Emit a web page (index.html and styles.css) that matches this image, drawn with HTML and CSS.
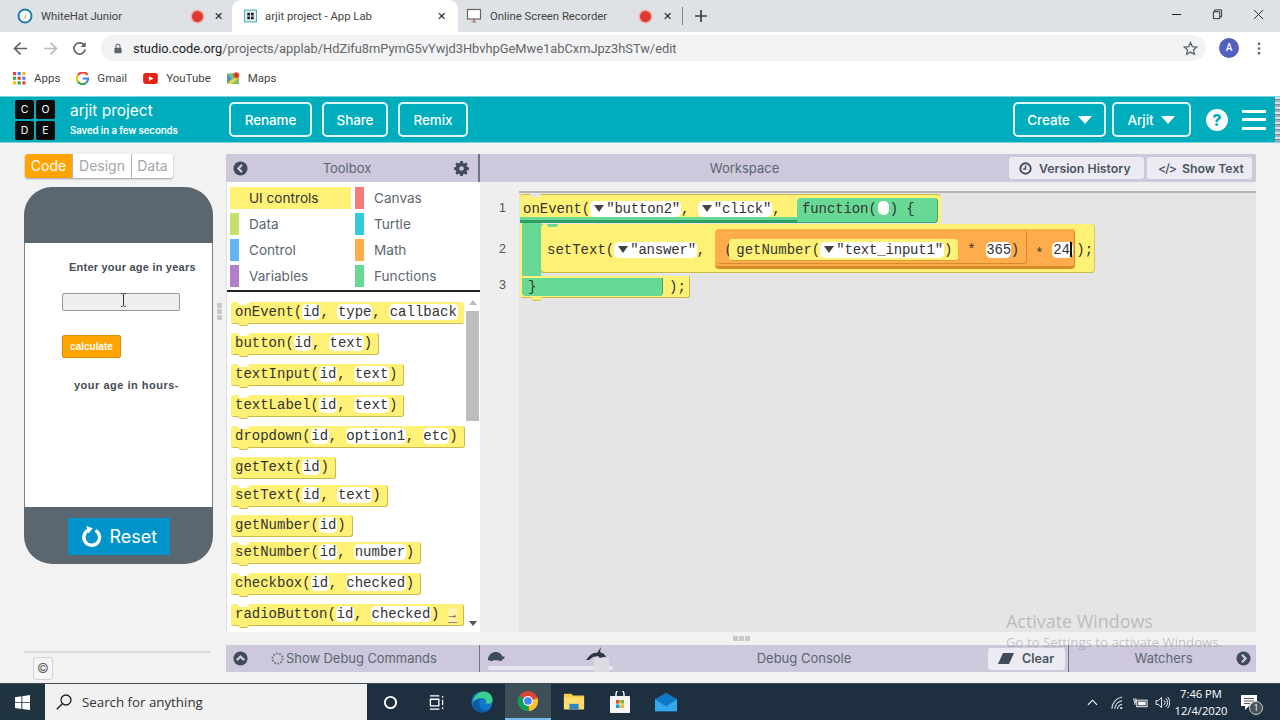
FILE: index.html
```html
<!DOCTYPE html>
<html lang="en">
<head>
<meta charset="utf-8">
<title>arjit project - App Lab</title>
<link rel="stylesheet" href="styles.css">
</head>
<body>
<div class="tabstrip">
  <div class="tab tab-first">
    <svg class="favicon" viewBox="0 0 16 16"><circle cx="8" cy="8" r="6.5" fill="#fff" stroke="#1f7fa8" stroke-width="2"/><path d="M10 4 L6.5 11 L8.5 9.5Z" fill="#f39c2d"/></svg>
    <span class="tab-title">WhiteHat Junior</span>
    <span class="rec"></span>
    <span class="tab-x">✕</span>
  </div>
  <div class="tab tab-active">
    <svg class="favicon" viewBox="0 0 16 16"><rect x=".7" y=".7" width="14.6" height="14.6" fill="#e6f3f4" stroke="#3fa6b2" stroke-width="1.2"/><rect x="4" y="4" width="3.4" height="3.4" fill="#222"/><rect x="8.6" y="4" width="3.4" height="3.4" fill="#222"/><rect x="4" y="8.6" width="3.4" height="3.4" fill="#222"/><rect x="8.6" y="8.6" width="3.4" height="3.4" fill="#222"/></svg>
    <span class="tab-title">arjit project - App Lab</span>
    <span class="tab-x">✕</span>
  </div>
  <div class="tab tab-last">
    <svg class="favicon" viewBox="0 0 16 16"><rect x="1.5" y="1.5" width="13" height="9.5" fill="#fff" stroke="#666" stroke-width="1.2"/><path d="M8 11v3" stroke="#c44" stroke-width="1.4"/><path d="M5.5 14h5" stroke="#888"/></svg>
    <span class="tab-title">Online Screen Recorder</span>
    <span class="rec"></span>
    <span class="tab-x">✕</span>
  </div>
  <span class="tab-sep"></span>
  <svg class="newtab" viewBox="0 0 12 12"><path d="M6 0v12M0 6h12" stroke="#3c4043" stroke-width="1.7"/></svg>
  <div class="win-controls">
    <svg viewBox="0 0 12 12"><path d="M1 6h10" stroke="#222" stroke-width="1.1"/></svg>
    <svg viewBox="0 0 12 12"><path d="M3 3V1h7.5v7.5H8.5M1.5 3h7v7.5h-7z" fill="none" stroke="#222" stroke-width="1"/></svg>
    <svg viewBox="0 0 12 12"><path d="M1 1l10 10M11 1L1 11" stroke="#222" stroke-width="1"/></svg>
  </div>
</div>

<div class="toolbar">
  <svg class="nav" viewBox="0 0 16 16"><path d="M15 8H2M8 1.7L1.7 8 8 14.3" fill="none" stroke="#5f6368" stroke-width="1.8"/></svg>
  <svg class="nav" viewBox="0 0 16 16"><path d="M1 8h13M8 1.7L14.3 8 8 14.3" fill="none" stroke="#b9bcc0" stroke-width="1.8"/></svg>
  <svg class="nav" viewBox="0 0 16 16"><path d="M13.4 5.2A6 6 0 1 0 14 9" fill="none" stroke="#5f6368" stroke-width="1.8"/><path d="M14.6 1v5.4H9.2z" fill="#5f6368"/></svg>
  <div class="omnibox">
    <svg class="lock" viewBox="0 0 10 12"><rect x=".5" y="5" width="9" height="7" rx="1" fill="#5f6368"/><path d="M2.5 5V3.2a2.5 2.5 0 0 1 5 0V5" fill="none" stroke="#5f6368" stroke-width="1.3"/></svg>
    <span class="url"><b>studio.code.org</b>/projects/applab/HdZifu8mPymG5vYwjd3HbvhpGeMwe1abCxmJpz3hSTw/edit</span>
    <svg class="star" viewBox="0 0 16 16"><path d="M8 1.6l1.9 4.3 4.7.5-3.5 3.1 1 4.6L8 11.8l-4.1 2.3 1-4.6L1.4 6.4l4.7-.5z" fill="none" stroke="#5f6368" stroke-width="1.4"/></svg>
  </div>
  <span class="avatar">A</span>
  <svg class="kebab" viewBox="0 0 4 14"><circle cx="2" cy="2" r="1.4" fill="#5f6368"/><circle cx="2" cy="7" r="1.4" fill="#5f6368"/><circle cx="2" cy="12" r="1.4" fill="#5f6368"/></svg>
</div>

<div class="bookmarks">
  <span class="bm">
    <svg class="bm-icon" viewBox="0 0 14 14"><g><rect x="0" y="0" width="3.4" height="3.4" fill="#ea4335"/><rect x="5" y="0" width="3.4" height="3.4" fill="#4285f4"/><rect x="10" y="0" width="3.4" height="3.4" fill="#fbbc05"/><rect x="0" y="5" width="3.4" height="3.4" fill="#34a853"/><rect x="5" y="5" width="3.4" height="3.4" fill="#ea4335"/><rect x="10" y="5" width="3.4" height="3.4" fill="#4285f4"/><rect x="0" y="10" width="3.4" height="3.4" fill="#fbbc05"/><rect x="5" y="10" width="3.4" height="3.4" fill="#34a853"/><rect x="10" y="10" width="3.4" height="3.4" fill="#ea4335"/></g></svg>
    Apps</span>
  <span class="bm">
    <svg class="bm-icon" viewBox="0 0 14 14"><path d="M12.4 3.3A6 6 0 0 0 2 3.6" fill="none" stroke="#ea4335" stroke-width="2.2"/><path d="M2 3.6a6 6 0 0 0 0 6.8" fill="none" stroke="#fbbc05" stroke-width="2.2"/><path d="M2 10.4a6 6 0 0 0 9 1.2" fill="none" stroke="#34a853" stroke-width="2.2"/><path d="M11 11.6A6 6 0 0 0 13 7H7.2" fill="none" stroke="#4285f4" stroke-width="2.2"/></svg>
    Gmail</span>
  <span class="bm">
    <svg class="bm-icon bm-yt" viewBox="0 0 16 12"><rect width="16" height="12" rx="3" fill="#e62117"/><path d="M6.2 3.2l5 2.8-5 2.8z" fill="#fff"/></svg>
    YouTube</span>
  <span class="bm">
    <svg class="bm-icon" viewBox="0 0 14 14"><path d="M0 2l7-1 6 1v11H0z" fill="#7cc36a"/><path d="M0 13L13 2v4L5 13z" fill="#f5d23f"/><path d="M0 2l5 5-5 5z" fill="#4a90e2"/><circle cx="10" cy="3.6" r="3.2" fill="#dd4b3e"/><circle cx="10" cy="3.6" r="1.1" fill="#8a2018"/></svg>
    Maps</span>
</div>

<header class="header">
  <div class="logo"><span>C</span><span>O</span><span>D</span><span>E</span></div>
  <div class="project">
    <div class="project-name">arjit project</div>
    <div class="project-status">Saved in a few seconds</div>
  </div>
  <div class="btn-group">
    <a class="hbtn hbtn-rename">Rename</a>
    <a class="hbtn hbtn-share">Share</a>
    <a class="hbtn hbtn-remix">Remix</a>
  </div>
  <div class="header-right">
    <a class="hbtn hbtn-create">Create <i class="caret"></i></a>
    <a class="hbtn hbtn-user">Arjit <i class="caret"></i></a>
    <span class="help">?</span>
    <span class="burger"><i></i><i></i><i></i></span>
  </div>
  <span class="stripe"></span>
</header>

<main class="main">
  <section class="left">
    <div class="modes">
      <span class="mode mode-on">Code</span><span class="mode">Design</span><span class="mode">Data</span>
    </div>
    <div class="phone">
      <div class="phone-top"></div>
      <div class="screen">
        <div class="lbl lbl-enter">Enter your age in years</div>
        <div class="age-input"></div>
        <div class="calc">calculate</div>
        <div class="lbl lbl-hours">your age in hours-</div>
        <svg class="ibeam" viewBox="0 0 7 14"><path d="M1 .6h1.5l1 1 1-1H6M3.5 1.6v10.8M1 13.4h1.500l1-1 1 1H6" fill="none" stroke="#333" stroke-width="1"/></svg>
      </div>
      <div class="phone-bottom">
        <div class="reset">
          <svg class="reset-ico" viewBox="0 0 24 24"><path d="M9 4.6A9 9 0 1 0 16.4 5" fill="none" stroke="#fff" stroke-width="3.8"/><path d="M6 0l7.5 2.6-5 6z" fill="#fff"/></svg>
          <span>Reset</span>
        </div>
      </div>
    </div>
    <div class="legal"><span class="copyright">©</span></div>
    <span class="grip"><i></i><i></i><i></i></span>
  </section>

  <section class="ide">
    <div class="pane-head tb-head">
      <svg class="round-ico" viewBox="0 0 16 16"><circle cx="8" cy="8" r="7.5" fill="#3f4b57"/><path d="M9.6 4L5.8 8l3.8 4" fill="none" stroke="#cfcadc" stroke-width="2.4"/></svg>
      <span class="pane-title">Toolbox</span>
      <svg class="gear" viewBox="0 0 16 16"><path fill="#3f4b57" fill-rule="evenodd" d="M6.7 0h2.6l.4 2.1 1.3.6 1.8-1.2 1.8 1.8-1.2 1.8.6 1.3 2 .4v2.6l-2 .4-.6 1.3 1.2 1.8-1.8 1.8-1.8-1.2-1.3.6-.4 2.1H6.7l-.4-2.1-1.3-.6-1.8 1.2-1.8-1.8 1.2-1.8-.6-1.3-2-.4V6.800l2-.4.6-1.3-1.2-1.800 1.800-1.800 1.800 1.200 1.300-.6zM8 5.500a2.500 2.500 0 1 0 0 5 2.500 2.500 0 0 0 0-5z"/></svg>
    </div>
    <div class="pane-head ws-head">
      <span class="ws-title">Workspace</span>
      <span class="ws-btn ws-version">
        <svg class="ws-ico" viewBox="0 0 14 14"><circle cx="7" cy="7" r="5.600" fill="none" stroke="#3f4b57" stroke-width="2"/><path d="M7 3.800V7.500H4.500" fill="none" stroke="#3f4b57" stroke-width="1.500"/></svg>
        Version History</span>
      <span class="ws-btn ws-text"><span class="code-ico">&lt;/&gt;</span> Show Text</span>
    </div>

    <div class="toolbox">
      <div class="cats">
        <div class="cat cat-active" ><i class="sw sw-ui"></i>UI controls</div>
        <div class="cat"><i class="sw sw-canvas"></i>Canvas</div>
        <div class="cat"><i class="sw sw-data"></i>Data</div>
        <div class="cat"><i class="sw sw-turtle"></i>Turtle</div>
        <div class="cat"><i class="sw sw-control"></i>Control</div>
        <div class="cat"><i class="sw sw-math"></i>Math</div>
        <div class="cat"><i class="sw sw-vars"></i>Variables</div>
        <div class="cat"><i class="sw sw-funcs"></i>Functions</div>
      </div>
      <div class="palette">
        <div class="palette-list">
          <div class="blk stmt blk-clip">onEvent(<u>id</u>, <u>type</u>, <u>callback</u></div>
          <div class="blk stmt">button(<u>id</u>, <u>text</u>)</div>
          <div class="blk stmt">textInput(<u>id</u>, <u>text</u>)</div>
          <div class="blk stmt">textLabel(<u>id</u>, <u>text</u>)</div>
          <div class="blk stmt">dropdown(<u>id</u>, <u>option1</u>, <u>etc</u>)</div>
          <div class="blk gap6">getText(<u>id</u>)</div>
          <div class="blk stmt gap8">setText(<u>id</u>, <u>text</u>)</div>
          <div class="blk gap5">getNumber(<u>id</u>)</div>
          <div class="blk stmt">setNumber(<u>id</u>, <u>number</u>)</div>
          <div class="blk stmt">checkbox(<u>id</u>, <u>checked</u>)</div>
          <div class="blk stmt">radioButton(<u>id</u>, <u>checked</u>) <span class="more">→</span></div>
        </div>
        <div class="scroll">
          <i class="sc-up"></i>
          <i class="sc-thumb"></i>
          <i class="sc-down"></i>
        </div>
      </div>
    </div>

    <div class="workspace">
      <div class="gutter"><span class="ln ln1">1</span><span class="ln ln2">2</span><span class="ln ln3">3</span></div>
      <div class="canvas">
        <div class="script">
          <div class="ev-head">
            <div class="ev-args">onEvent(<u><i class="tri"></i>"button2"</u>, <u class="click"><i class="tri"></i>"click"</u>,</div>
            <div class="fn">function(<u class="fn-arg"></u>) {</div>
          </div>
          <div class="ev-mid">
            <div class="green-col"></div>
            <div class="settext">
              setText(<u class="answer"><i class="tri"></i>"answer"</u>,
              <div class="mul">
                <div class="mul-in">
                  <span class="paren">(</span>
                  <div class="getnum">getNumber(<u><i class="tri"></i>"text_input1"</u>)</div>
                  <span class="star">*</span>
                  <u class="num365">365</u><span class="paren2">)</span>
                </div>
                <span class="star star2">*</span>
                <u class="num24">24<i class="caretline"></i></u>
              </div>
              <span class="tail">);</span>
            </div>
          </div>
          <div class="ev-foot">
            <div class="fn-end">}</div><span class="foot-tail">);</span>
          </div>
        </div>
      </div>
    </div>

    <div class="handle"><i></i><i></i><i></i></div>

    <div class="debug">
      <div class="dbg-left">
        <svg class="round-ico" viewBox="0 0 16 16"><circle cx="8" cy="8" r="7.500" fill="#3f4b57"/><path d="M4 9.800L8 6l4 3.800" fill="none" stroke="#cfcadc" stroke-width="2.400"/></svg>
        <svg class="spin" viewBox="0 0 14 14"><circle cx="7" cy="7" r="5.500" fill="none" stroke="#6b7480" stroke-width="2" stroke-dasharray="1.800 1.600"/></svg>
        <span>Show Debug Commands</span>
      </div>
      <div class="dbg-console">
        <div class="speed">
          <svg class="turtle" viewBox="0 0 20 12"><path d="M1 10C2 3 6 1 10 1s6 3 7 5h2c1 1 0 3-2 3l-1 2h-2l-1-1H7l-1 1H4l-1-1z" fill="#3f4b57"/></svg>
          <svg class="rabbit" viewBox="0 0 20 14"><path d="M0 13C4 8 7 5 11 6L15 0l-1 5 4 2 2 3-3 0-3 1-2-2-5 1-4 3z" fill="#2d3640"/></svg>
          <div class="track"><i class="thumb"></i></div>
        </div>
        <span class="dbg-title">Debug Console</span>
        <span class="clear">
          <svg class="eraser" viewBox="0 0 16 11"><path d="M5 0h11L11 11H0z" fill="#3f4b57"/></svg>
          Clear</span>
      </div>
      <div class="dbg-watch">
        <span class="watch-title">Watchers</span>
        <svg class="round-ico" viewBox="0 0 16 16"><circle cx="8" cy="8" r="7.500" fill="#3f4b57"/><path d="M6.400 4l3.800 4-3.800 4" fill="none" stroke="#cfcadc" stroke-width="2.400"/></svg>
      </div>
    </div>
  </section>
  <div class="activate">
    <div class="act-1">Activate Windows</div>
    <div class="act-2">Go to Settings to activate Windows.</div>
  </div>
</main>

<footer class="taskbar">
  <div class="start"><svg viewBox="0 0 16 16"><path d="M0 2.300l6.800-1v6.300H0zM7.800 1.200L16 0v7.600H7.800zM0 8.500h6.800v6.300L0 13.800zM7.800 8.500H16V16l-8.200-1.200z" fill="#fff"/></svg></div>
  <div class="search">
    <svg viewBox="0 0 16 16"><circle cx="10" cy="6" r="5" fill="none" stroke="#222" stroke-width="1.300"/><path d="M6.300 9.700L.8 15.200" stroke="#222" stroke-width="1.500"/></svg>
    <span>Search for anything</span>
  </div>
  <div class="task"><svg viewBox="0 0 16 16"><circle cx="8" cy="8" r="6" fill="none" stroke="#fff" stroke-width="2"/></svg></div>
  <div class="task"><svg viewBox="0 0 16 16"><path d="M1 1h10M1 15h10M1.500 4.500h9v7h-9zM14.500 1v2M14.500 5v6M14.500 13v2" fill="none" stroke="#fff" stroke-width="1.400"/></svg></div>
  <div class="task"><svg class="big" viewBox="0 0 24 24"><circle cx="12" cy="12" r="11.500" fill="#1377c9"/><path d="M2 13C3 5 9 .5 14 .5c6 0 10 5 9.500 10-.2 3-5 4-7 3 1-3-1-6-5-6-4 0-8 2-9.500 5.500z" fill="#3ecf8e"/><path d="M9 14c0 5 5 9 11 6-2 2-5 3.500-8 3.500C6 23.500 1 18 2 13c2-3 5-4.500 7-4z" fill="#0c59a4"/></svg></div>
  <div class="task task-on"><svg class="big" viewBox="0 0 24 24"><circle cx="12" cy="12" r="11" fill="#db4437"/><path d="M12 12L22.500 9a11 11 0 0 1-9.500 14z" fill="#fbc02d"/><path d="M12 12l1 11A11 11 0 0 1 2.500 6z" fill="#0f9d58"/><circle cx="12" cy="12" r="5.400" fill="#fff"/><circle cx="12" cy="12" r="4.200" fill="#4285f4"/></svg></div>
  <div class="task"><svg class="big" viewBox="0 0 24 20"><path d="M1 1h8l2 2h12v15H1z" fill="#f7c948"/><rect x="1" y="5" width="22" height="13" fill="#ffdc6e"/><rect x="7" y="12" width="10" height="6" fill="#2f88c4"/></svg></div>
  <div class="task"><svg class="big" viewBox="0 0 20 22"><path d="M6 6V3a4 4 0 0 1 8 0v3" fill="none" stroke="#fff" stroke-width="1.400"/><rect x="0" y="5" width="20" height="17" rx="1" fill="#f5f5f5"/><rect x="6" y="9" width="3.600" height="3.600" fill="#e2572a"/><rect x="10.400" y="9" width="3.600" height="3.600" fill="#7db72f"/><rect x="6" y="13.400" width="3.600" height="3.600" fill="#1c9ad6"/><rect x="10.400" y="13.400" width="3.600" height="3.600" fill="#f5b81f"/></svg></div>
  <div class="task"><svg class="big" viewBox="0 0 24 20"><path d="M0 7L12 0l12 7v13H0z" fill="#0f78c8"/><path d="M0 7l12 8 12-8v13H0z" fill="#34a8ec"/></svg></div>
  <div class="tray">
    <svg class="tr-up" viewBox="0 0 12 7"><path d="M1 6l5-5 5 5" fill="none" stroke="#fff" stroke-width="1.200"/></svg>
    <svg class="tr-wifi" viewBox="0 0 14 14"><path d="M1 14A13 13 0 0 1 12 1M4 14a10 10 0 0 1 8-9M7 14a6 6 0 0 1 5-5" fill="none" stroke="#dfe3e6" stroke-width="1.100"/><circle cx="11" cy="13" r="1.200" fill="#dfe3e6"/></svg>
    <svg class="tr-bat" viewBox="0 0 16 11"><rect x="4" y="3" width="11" height="7" fill="none" stroke="#fff"/><rect x="5.500" y="4.500" width="8" height="4" fill="#fff"/><path d="M1 1v3l2 1.500V1M2 5v3" stroke="#fff" fill="none"/></svg>
    <svg class="tr-vol" viewBox="0 0 16 14"><path d="M1 5h2.500L7 1.500v11L3.500 9H1z" fill="none" stroke="#fff"/><path d="M9.500 4.500a3 3 0 0 1 0 5M11.500 2.500a6 6 0 0 1 0 9M13.500 1a9 9 0 0 1 0 12" fill="none" stroke="#fff"/></svg>
    <div class="clock"><div>7:46 PM</div><div>12/4/2020</div></div>
    <div class="notif">
      <svg viewBox="0 0 16 15"><path d="M0 0h16v11H8l-4 4v-4H0z" fill="#fff"/><path d="M3 3.500h10M3 6h10M3 8.500h6" stroke="#555"/></svg>
      <span class="badge">1</span>
    </div>
  </div>
</footer>
</body>
</html>
```
FILE: styles.css
```css
* { box-sizing: border-box; }
html, body { margin: 0; padding: 0; }
body {
  width: 1280px; height: 720px; overflow: hidden;
  display: flex; flex-direction: column;
  font-family: Roboto, "Liberation Sans", sans-serif;
  background: #fff; color: #333;
}
u { text-decoration: none; }
i { font-style: normal; }
svg { display: block; flex: none; }

/* browser chrome */
.tabstrip { height: 32px; flex: none; background: #dee1e6; display: flex; align-items: center; }
.tab { height: 32px; display: flex; align-items: center; font-size: 11.300px; color: #444; padding: 0 7px 0 18px; position: relative; }
.tab-first { width: 232px; padding-left: 17px; }
.tab-active { width: 226px; background: #fff; border-radius: 9px 9px 0 0; padding-left: 11px; }
.tab-last { width: 226px; padding-left: 8px; padding-right: 10px; }
.favicon { width: 16px; height: 16px; margin-right: 8px; }
.tab-active .favicon { width: 13px; height: 14px; margin: 0 8px 0 1px; }
.tab-title { flex: 1; white-space: nowrap; }
.rec { width: 11px; height: 11px; border-radius: 50%; background: #dc3a33; box-shadow: 0 0 0 1.500px #f3b2ad; margin-right: 12px; }
.tab-x { font-size: 11px; color: #222; width: 10px; line-height: 1; margin-right: 1px; }
.tab-first .rec { margin-right: 11px; }
.tab-active .tab-x { margin-right: 4px; }
.tab-sep { width: 1px; height: 18px; background: #888; margin-left: -2px; }
.newtab { width: 12px; height: 12px; margin-left: 12px; }
.win-controls { margin-left: auto; display: flex; gap: 30px; padding-right: 16px; margin-top: -3px; }
.win-controls svg { width: 11px; height: 11px; }

.toolbar { height: 32px; flex: none; display: flex; align-items: center; position: relative; }
.nav { width: 15px; height: 15px; margin-left: 13px; }
.nav + .nav { margin-left: 15px; }
.nav + .nav + .nav { margin-left: 14px; }
.omnibox { width: 1105px; height: 26px; margin-left: 14px; background: #f1f3f4; border-radius: 13px; display: flex; align-items: center; padding: 0 8px 0 13px; }
.lock { width: 8px; height: 11px; }
.url { margin-left: 11px; font-size: 12.850px; color: #666; white-space: nowrap; flex: 1; }
.url b { font-weight: 400; color: #222; }
.star { width: 15px; height: 15px; }
.avatar { width: 20px; height: 20px; border-radius: 50%; background: #5161c0; color: #fff; font-size: 10px; text-align: center; line-height: 20px; margin-left: 13px; font-weight: 500; }
.kebab { width: 4px; height: 13px; margin-left: 18px; }

.bookmarks { height: 32px; flex: none; display: flex; align-items: center; padding: 0 0 4px 13px; font-size: 11.500px; color: #444; gap: 16px; }
.bm { display: flex; align-items: center; gap: 8px; white-space: nowrap; }
.bm-icon { width: 13px; height: 13px; }
.bm-yt { width: 15px; height: 11px; }

/* app header */
.header { height: 47px; flex: none; background: #00adbc; border-top: 1px solid #7fd5dc; border-bottom: 1px solid #7fd5dc; display: flex; align-items: center; padding-left: 15px; position: relative; color: #fff; font-family: Inter, "Liberation Sans", sans-serif; }
.logo { width: 40px; height: 39px; display: grid; grid-template-columns: 19px 19px; grid-template-rows: 19px 19px; gap: 2px; }
.logo span { background: #0b0b0b; border-radius: 2px; color: #fff; font-size: 10.500px; text-align: center; line-height: 19px; }
.project { margin-left: 15px; width: 159px; }
.project-name { font-size: 15.500px; line-height: 18px; }
.project-status { font-size: 9.700px; font-weight: 600; line-height: 14px; margin-top: 4px; letter-spacing: -.1px; }
.btn-group { display: flex; gap: 10px; }
.hbtn { height: 35px; border: 2px solid #dff5f7; border-radius: 5px; font-size: 13.500px; font-weight: 500; display: flex; align-items: center; justify-content: center; letter-spacing: -.1px; }
.hbtn-rename { width: 83px; }
.hbtn-share { width: 66px; }
.hbtn-remix { width: 70px; }
.header-right { margin-left: auto; display: flex; align-items: center; padding-right: 14px; }
.hbtn-create { width: 93px; gap: 8px; }
.hbtn-user { width: 79px; gap: 8px; margin-left: 6px; }
.caret { border-left: 7px solid transparent; border-right: 7px solid transparent; border-top: 8px solid #fff; }
.help { width: 22px; height: 22px; border-radius: 50%; background: #fff; color: #00adbc; font-weight: 800; font-size: 16px; line-height: 22px; text-align: center; margin-left: 15px; }
.burger { display: flex; flex-direction: column; gap: 5.500px; width: 24px; margin-left: 14px; }
.burger i { height: 3px; background: #fff; display: block; }
.stripe { position: absolute; right: 0; top: 0; bottom: 0; width: 5px; background: repeating-linear-gradient(#d8e0e4 0 2px, #7d8b96 2px 3px, #c8a0a8 3px 4px, #88b8c0 4px 5px); }

/* main */
.main { height: 540px; flex: none; background: #f2f2f2; display: flex; position: relative; font-family: Inter, "Liberation Sans", sans-serif; }
.left { width: 226px; flex: none; padding: 11px 0 0 24px; display: flex; flex-direction: column; position: relative; }
.modes { display: flex; margin-left: 1px; height: 24px; width: 148px; box-shadow: 0 1px 2px rgba(0,0,0,.35); border-radius: 3px; }
.mode { font-size: 14px; color: #a2a7ac; background: #fff; padding: 0 5px; line-height: 24px; border-left: 1px solid #b5b5b5; flex: 1; text-align: center; white-space: nowrap; }
.mode-on { background: #ffa400; color: #fff; border-left: 0; flex: none; width: 47px; border-radius: 3px 0 0 3px; }
.mode:last-child { flex: none; width: 42px; border-radius: 0 3px 3px 0; }
.phone { margin-top: 9px; width: 189px; height: 377px; display: flex; flex-direction: column; border-radius: 28px; overflow: hidden; }
.phone-top { height: 56px; flex: none; background: #5b6770; }
.screen { height: 264px; flex: none; background: #fff; border-left: 1px solid #7a8289; border-right: 1px solid #7a8289; position: relative; display: flex; flex-direction: column; align-items: flex-start; font-family: "Liberation Sans", Arial, sans-serif; }
.lbl { font-weight: 700; font-size: 11px; color: #454c54; line-height: 14px; white-space: nowrap; }
.lbl-enter { margin: 17px 0 0 44px; letter-spacing: .22px; }
.age-input { width: 118px; height: 18px; margin: 19px 0 0 37px; background: #efefef; border: 1px solid #999; border-radius: 2px; }
.calc { width: 59px; height: 23px; margin: 24px 0 0 37px; background: #ffa400; border: 1px solid #d98c10; border-radius: 2px; color: #fff; font-size: 10px; font-weight: 700; text-align: center; line-height: 21px; }
.lbl-hours { margin: 20px 0 0 49px; letter-spacing: .5px; }
.ibeam { position: absolute; left: 95px; top: 50px; width: 7px; height: 14px; }
.phone-bottom { flex: 1; background: #5b6770; display: flex; justify-content: center; align-items: flex-start; padding: 11px 0 0 0; }
.reset { width: 102px; height: 37px; background: #0094ca; color: #fff; font-size: 18px; display: flex; align-items: center; padding-left: 13px; gap: 8px; }
.reset-ico { width: 21px; height: 23px; }
.legal { margin-top: auto; width: 187px; height: 32px; border-top: 2px solid #dcdcdc; padding: 4px 0 0 9px; }
.copyright { display: block; width: 20px; height: 23px; border: 1px solid #d3d3d3; border-radius: 3px; font-size: 13px; color: #666; text-align: center; line-height: 21px; background: #f5f5f5; }
.grip { position: absolute; left: 217px; top: 160px; display: flex; flex-direction: column; gap: 1px; }
.grip i { width: 5px; height: 5px; background: #c8c8c8; display: block; border-radius: 1px; }

.ide { margin-top: 11px; width: 1030px; display: grid; grid-template-columns: 254px 776px; grid-template-rows: 28px 450px 13px 27px; }
.pane-head { background: #cdc8dc; display: flex; align-items: center; color: #5b6770; font-size: 13px; }
.tb-head { padding: 0 9px 0 7px; justify-content: space-between; border-right: 2px solid #6f7680; }
.pane-title { margin-right: 8px; }
.round-ico { width: 15px; height: 15px; }
.gear { width: 15px; height: 15px; }
.ws-head { padding: 0 4px 0 0; }
.ws-title { width: 529px; text-align: center; }
.ws-btn { height: 22px; background: #ecebf3; border-radius: 3px; display: flex; align-items: center; font-weight: 600; color: #4a5560; font-size: 12.300px; white-space: nowrap; }
.ws-version { width: 135px; padding-left: 10px; gap: 7px; }
.ws-text { width: 105px; margin-left: 3px; padding-left: 11px; gap: 6px; }
.ws-ico { width: 13px; height: 13px; }
.code-ico { font-weight: 500; letter-spacing: -1px; }

.toolbox { background: #fff; display: flex; flex-direction: column; overflow: hidden; border-left: 1px solid #ddd; }
.cats { height: 110px; flex: none; border-bottom: 2px solid #222; padding: 5px 0 0 3px; margin-left: -1px; display: grid; grid-template-columns: 125px 124px; grid-auto-rows: 26px; color: #5b6770; font-size: 13.600px; }
.cat { display: flex; align-items: center; height: 22px; position: relative; padding-left: 20px; }
.sw { position: absolute; left: 1px; top: 0; width: 9px; height: 22px; }
.cat-active { color: #333; isolation: isolate; }
.cat-active .sw { width: 121px; z-index: -1; }
.sw-ui { background: #fff176; }
.sw-data { background: #c6e06a; }
.sw-control { background: #64b5f6; }
.sw-vars { background: #b57fcb; }
.sw-canvas { background: #f47c7c; }
.sw-turtle { background: #35c9dd; }
.sw-math { background: #ffac4d; }
.sw-funcs { background: #68d995; }

.palette { flex: 1; display: flex; min-height: 0; }
.palette-list { width: 238px; padding: 10px 0 0 4px; overflow: hidden; flex: none; }
.blk { width: fit-content; height: 22px; line-height: 21px; white-space: nowrap; background: #fff176; border-right: 1px solid #c9b94f; border-bottom: 1px solid #c9b94f; border-radius: 3px; padding: 0 6px 0 4px; margin-bottom: 9px; font-family: "Liberation Mono", "Courier New", monospace; font-size: 14px; color: #333; position: relative; }
.blk u { background: #fff; border-radius: 5px; padding: 0 .7px; }
.script u { background: #fff; border-radius: 5px; }
.blk-clip { border-right: 0; }
.stmt::before { content: ""; position: absolute; left: 7px; top: 0; width: 11px; height: 3px; background: #fff; border-radius: 0 0 4px 4px; }
.stmt::after { content: ""; position: absolute; left: 7px; bottom: -3px; width: 11px; height: 3px; background: #fff176; border-bottom: 1px solid #c9b94f; border-radius: 0 0 4px 4px; }
.gap6 { margin-bottom: 6px; }
.gap8 { margin-bottom: 8px; }
.gap5 { margin-bottom: 5px; }
.more { border-bottom: 1px solid #888; background: #fff3a8; font-size: 12px; padding: 0 1px; }
.scroll { width: 13px; margin-left: 1px; position: relative; flex: none; display: flex; flex-direction: column; align-items: center; padding-top: 8px; }
.sc-up { width: 0; height: 0; border-left: 4px solid transparent; border-right: 4px solid transparent; border-bottom: 5px solid #bbb; }
.sc-thumb { width: 13px; height: 110px; background: #bdbdbd; margin-top: 6px; }
.sc-down { width: 0; height: 0; border-left: 4px solid transparent; border-right: 4px solid transparent; border-top: 5px solid #555; margin-top: auto; margin-bottom: 6px; }

.workspace { display: flex; background: #eeeeee; min-height: 0; overflow: hidden; }
.gutter { width: 39px; flex: none; display: flex; flex-direction: column; align-items: center; padding: 19px 0 0 6px; font-size: 12.500px; color: #555; font-family: "Liberation Sans", sans-serif; }
.ln { display: block; height: 14px; line-height: 14px; }
.ln2 { margin-top: 27px; }
.ln3 { margin-top: 22px; }
.canvas { flex: 1; margin-top: 9px; background: #e5e5e5; border-top: 2px solid #b5b5b5; padding: 0 0 0 1px; min-width: 0; }
.script { width: 576px; display: flex; flex-direction: column; align-items: flex-start; font-family: "Liberation Mono", "Courier New", monospace; font-size: 14px; color: #333; white-space: nowrap; padding-top: 1px; }
.script u { letter-spacing: -.2px; }
.ev-head { width: 421px; height: 29px; background: #fff176; border-top: 1px solid #c9b94f; border-radius: 3px 3px 0 0; display: flex; align-items: flex-end; padding-right: 3px; position: relative; }
.ev-head::before { content: ""; position: absolute; left: 10px; top: -1px; width: 11px; height: 3px; background: #e5e5e5; border-radius: 0 0 4px 4px; }
.ev-args { flex: 1; height: 28px; padding: 6px 0 0 3px; border-bottom: 3px solid #2f9e63; box-shadow: inset 0 -3px 0 #68d995; line-height: 16px; }
.ev-args u { padding: 0 1px 0 3px; }
.fn { width: 141px; height: 25px; flex: none; background: #68d995; border-radius: 4px 4px 4px 0; padding: 3px 0 0 5px; line-height: 16px; border-right: 1px solid #3fa56e; border-bottom: 1px solid #3fa56e; letter-spacing: -.1px; }
.fn-arg { display: inline-block; width: 11px; height: 14px; vertical-align: -2px; margin: 0 1px; }
.tri { display: inline-block; width: 0; height: 0; border-left: 5px solid transparent; border-right: 5px solid transparent; border-top: 7px solid #444; margin: 0 2px 1px 1px; }
.ev-mid { width: 576px; height: 53px; border-left: 2px solid #fff176; display: flex; }
.green-col { width: 19px; flex: none; background: #68d995; }
.settext { width: 554px; height: 49px; margin-top: 1px; background: #fff176; border-radius: 4px; border-right: 1px solid #d7c65a; border-bottom: 1px solid #c9b94f; display: flex; align-items: center; padding: 4px 0 0 6px; position: relative; flex: none; box-shadow: -3px 0 0 #68d995; }
.settext::before { content: ""; position: absolute; left: 6px; top: 0; width: 11px; height: 3px; background: #68d995; border-radius: 0 0 4px 4px; }
.answer { padding: 0 1px 0 3px; }
.mul { width: 360px; height: 40px; margin: -3px 0 0 10px; background: #ffac4d; border-radius: 4px; border-bottom: 3px solid #d98a2e; border-right: 1px solid #d98a2e; display: flex; align-items: center; flex: none; }
.mul-in { width: 310px; height: 34px; margin-left: 2px; background: #ffac4d; border-right: 1px solid #d98a2e; border-bottom: 1px solid #d98a2e; display: flex; align-items: center; flex: none; border-radius: 3px; padding-top: 6px; }
.paren { margin-left: 7px; width: 5px; }
.getnum { height: 22px; width: 229px; flex: none; background: #fff176; border-radius: 3px; padding: 2px 0 0 7px; line-height: 18px; border-bottom: 1px solid #d99f3b; }
.getnum u { padding: 0 1px 0 3px; }
.star { margin-left: 9px; }
.script .num365 { margin-left: 4px; padding: 0; }
.star2 { margin-left: 8px; padding-top: 6px; }
.script .num24 { margin: 6px 0 0 2px; padding: 0 1px; position: relative; }
.caretline { display: inline-block; width: 2px; height: 15px; background: #111; vertical-align: -3px; }
.tail { margin-left: 1px; }
.ev-foot { width: 170px; height: 22px; background: #fff176; border-left: 2px solid #fff176; border-right: 1px solid #c9b94f; border-bottom: 1px solid #c9b94f; border-radius: 0 0 3px 3px; display: flex; align-items: center; position: relative; }
.ev-foot::after { content: ""; position: absolute; left: 9px; bottom: -4px; width: 11px; height: 3px; background: #fff176; border-bottom: 1px solid #c9b94f; border-radius: 0 0 4px 4px; }
.fn-end { width: 141px; height: 18px; background: #68d995; border-radius: 0 0 4px 4px; border-right: 1px solid #3fa56e; padding-left: 6px; line-height: 18px; flex: none; }
.foot-tail { margin-left: 6px; }

.handle { grid-column: 1 / 3; display: flex; justify-content: center; align-items: center; gap: 1px; }
.handle i { width: 5px; height: 5px; background: #c8c8c8; display: block; }
.debug { grid-column: 1 / 3; background: #cdc8dc; display: flex; align-items: center; color: #5b6770; font-size: 13px; line-height: 15px; }
.dbg-left { width: 254px; height: 100%; flex: none; border-right: 1px solid #6f7680; display: flex; align-items: center; padding-left: 7px; }
.spin { width: 13px; height: 13px; margin: 0 2px 0 23px; }
.dbg-left span { white-space: nowrap; font-size: 12.900px; }
.dbg-console { flex: 1; height: 100%; display: flex; align-items: center; position: relative; }
.speed { width: 130px; height: 100%; position: relative; flex: none; }
.turtle { position: absolute; left: 6px; top: 6px; width: 20px; height: 11px; }
.rabbit { position: absolute; left: 106px; top: 2px; width: 20px; height: 14px; z-index: 1; }
.track { position: absolute; left: 8px; top: 21px; width: 125px; height: 4px; background: #e8e6ef; border-radius: 2px; }
.thumb { position: absolute; left: 106px; top: -8px; width: 15px; height: 14px; background: #dedce3; }
.dbg-title { width: 378px; text-align: center; flex: none; padding: 0 0 1px 10px; }
.clear { width: 77px; height: 22px; flex: none; background: #ecebf3; border-radius: 3px; display: flex; align-items: center; padding-left: 10px; gap: 8px; font-weight: 600; color: #4a5560; font-size: 12.500px; }
.eraser { width: 16px; height: 11px; }
.dbg-watch { width: 188px; height: 100%; flex: none; border-left: 1px solid #6f7680; display: flex; align-items: center; padding-right: 5px; }
.watch-title { flex: 1; text-align: center; padding: 0 0 1px 22px; }

.activate { position: absolute; left: 1006px; top: 466px; color: rgba(125,125,130,.42); font-family: "Open Sans", sans-serif; white-space: nowrap; }
.act-1 { font-size: 17.900px; line-height: 24px; }
.act-2 { font-size: 13.200px; line-height: 18px; }

/* taskbar */
.taskbar { height: 37px; flex: none; background: #1e3040; border-top: 1px solid #3c4c58; display: flex; align-items: center; font-family: "Open Sans", sans-serif; }
.start { width: 45px; height: 100%; background: #20343f; display: flex; align-items: center; justify-content: center; }
.start svg { width: 15px; height: 15px; }
.search { width: 322px; height: 100%; background: #f1f1f1; display: flex; align-items: center; padding-left: 11px; gap: 10px; font-size: 13.300px; color: #333; }
.search svg { width: 16px; height: 16px; }
.task { width: 46px; height: 100%; display: flex; align-items: center; justify-content: center; flex: none; }
.task svg { width: 15px; height: 15px; }
.task svg.big { width: 22px; height: 22px; }
.task-on { background: #3d4f59; border-bottom: 2px solid #76b9ed; }
.tray { margin-left: auto; display: flex; align-items: center; color: #fff; padding-right: 23px; }
.tr-up { width: 11px; height: 7px; }
.tr-wifi { width: 13px; height: 13px; margin-left: 13px; }
.tr-bat { width: 15px; height: 11px; margin-left: 9px; }
.tr-vol { width: 15px; height: 13px; margin-left: 7px; }
.clock { width: 66px; margin-left: -2px; text-align: center; font-size: 11.200px; line-height: 17px; }
.notif { position: relative; width: 16px; height: 15px; margin-left: 7px; }
.notif svg { width: 16px; height: 15px; }
.badge { position: absolute; left: 8px; top: 6px; width: 14px; height: 14px; border-radius: 50%; background: #47525a; border: 1px solid #ccc; color: #fff; font-size: 9px; line-height: 12px; text-align: center; }
```
